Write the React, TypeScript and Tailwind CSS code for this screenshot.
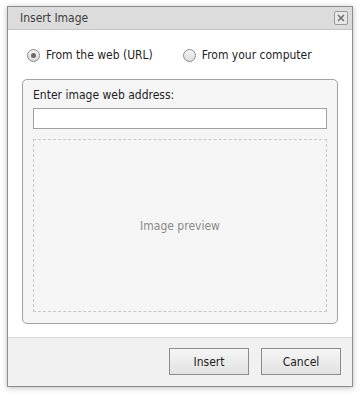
export default function App() {
  return (
    <div
      className="w-[361px] h-[396px] bg-white pt-[6px] pl-[7px]"
      style={{ fontFamily: '"DejaVu Sans Condensed", "DejaVu Sans", sans-serif' }}
    >
      <div className="w-[346px] h-[381px] border border-[#8c8c8c] bg-white shadow-[0_1px_6px_rgba(0,0,0,0.25)] flex flex-col">
        {/* title bar */}
        <div className="h-[23px] bg-[#dcdcdc] border-b border-[#c4c4c4] flex items-center justify-between pl-[12px] pr-[4px]">
          <span className="text-[12px] text-[#3c3c3c]">Insert Image</span>
          <button className="w-[14px] h-[14px] border border-[#9a9a9a] rounded-[2px] bg-[#e8e8e8] flex items-center justify-center">
            <svg width="8" height="8" viewBox="0 0 8 8">
              <path d="M1 1 L7 7 M7 1 L1 7" stroke="#707070" strokeWidth="1.6" />
            </svg>
          </button>
        </div>

        {/* body */}
        <div className="flex-1 px-[14px] pt-[16px]">
          <div className="flex items-center text-[12px] text-[#1e1e1e] pl-[5px]">
            <label className="flex items-center gap-[6px]">
              <span className="w-[13px] h-[13px] rounded-full border border-[#8a8a8a] bg-gradient-to-b from-[#f4f4f4] to-[#dcdcdc] flex items-center justify-center">
                <span className="w-[5px] h-[5px] rounded-full bg-[#6a6a6a]" />
              </span>
              From the web (URL)
            </label>
            <label className="flex items-center gap-[6px] ml-[30px]">
              <span className="w-[13px] h-[13px] rounded-full border border-[#8a8a8a] bg-gradient-to-b from-[#f4f4f4] to-[#dcdcdc]" />
              From your computer
            </label>
          </div>

          <div className="mt-[15px] h-[245px] border border-[#a3a3a3] rounded-[5px] bg-[#f5f5f5] px-[10px] pt-[8px]">
            <div className="text-[12px] text-[#1e1e1e] leading-[14px]">Enter image web address:</div>
            <input className="mt-[6px] w-[294px] h-[21px] border border-[#a0a0a0] bg-white outline-none block" />
            <div className="mt-[10px] w-[294px] h-[173px] border border-dashed border-[#c8c8c8] flex items-center justify-center text-[12px] text-[#8a8a8a]">
              Image preview
            </div>
          </div>
        </div>

        {/* footer */}
        <div className="h-[49px] border-t border-[#dcdcdc] bg-[#f1f1f1] flex items-start justify-end gap-[12px] pt-[10px] pr-[11px]">
          <button className="w-[80px] h-[27px] border border-[#8c8c8c] bg-gradient-to-b from-[#f6f6f6] to-[#e2e2e2] text-[12px] text-[#1e1e1e]">
            Insert
          </button>
          <button className="w-[80px] h-[27px] border border-[#8c8c8c] bg-gradient-to-b from-[#f6f6f6] to-[#e2e2e2] text-[12px] text-[#1e1e1e]">
            Cancel
          </button>
        </div>
      </div>
    </div>
  )
}
